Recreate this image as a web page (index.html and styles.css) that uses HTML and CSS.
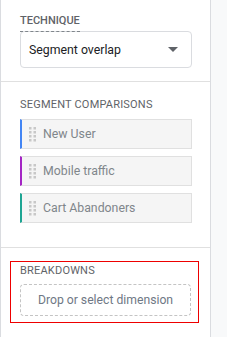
FILE: index.html
```html
<!DOCTYPE html>
<html lang="en">
<head>
    <meta charset="UTF-8">
    <meta name="viewport" content="width=device-width, initial-scale=1.0">
    <title>Tab settings</title>
    <link rel="stylesheet" href="styles.css">
</head>
<body>
    <div class="panel">
        <!-- Technique -->
        <div class="section technique">
            <div class="label-row"><span class="label hint">Technique</span></div>
            <div class="select">
                <span>Segment overlap</span>
                <svg class="caret" width="10" height="5" viewBox="0 0 10 5"><path d="M0 0h10L5 5z" fill="#5f6368"/></svg>
            </div>
        </div>

        <!-- Segment comparisons -->
        <div class="section segments">
            <div class="label">Segment comparisons</div>
            <div class="chip-list">
                <div class="chip blue">
                    <svg class="grip" width="8" height="15" viewBox="0 0 8 15">
                        <g fill="#c8c8c8">
                            <rect x="0" y="0" width="2.5" height="2.5"/><rect x="4.5" y="0" width="2.5" height="2.5"/>
                            <rect x="0" y="4" width="2.5" height="2.5"/><rect x="4.5" y="4" width="2.5" height="2.5"/>
                            <rect x="0" y="8" width="2.5" height="2.5"/><rect x="4.5" y="8" width="2.5" height="2.5"/>
                            <rect x="0" y="12" width="2.5" height="2.5"/><rect x="4.5" y="12" width="2.5" height="2.5"/>
                        </g>
                    </svg>
                    <span>New User</span>
                </div>
                <div class="chip purple">
                    <svg class="grip" width="8" height="15" viewBox="0 0 8 15">
                        <g fill="#c8c8c8">
                            <rect x="0" y="0" width="2.5" height="2.5"/><rect x="4.5" y="0" width="2.5" height="2.5"/>
                            <rect x="0" y="4" width="2.5" height="2.5"/><rect x="4.5" y="4" width="2.5" height="2.5"/>
                            <rect x="0" y="8" width="2.5" height="2.5"/><rect x="4.5" y="8" width="2.5" height="2.5"/>
                            <rect x="0" y="12" width="2.5" height="2.5"/><rect x="4.5" y="12" width="2.5" height="2.5"/>
                        </g>
                    </svg>
                    <span>Mobile traffic</span>
                </div>
                <div class="chip teal">
                    <svg class="grip" width="8" height="15" viewBox="0 0 8 15">
                        <g fill="#c8c8c8">
                            <rect x="0" y="0" width="2.5" height="2.5"/><rect x="4.5" y="0" width="2.5" height="2.5"/>
                            <rect x="0" y="4" width="2.5" height="2.5"/><rect x="4.5" y="4" width="2.5" height="2.5"/>
                            <rect x="0" y="8" width="2.5" height="2.5"/><rect x="4.5" y="8" width="2.5" height="2.5"/>
                            <rect x="0" y="12" width="2.5" height="2.5"/><rect x="4.5" y="12" width="2.5" height="2.5"/>
                        </g>
                    </svg>
                    <span>Cart Abandoners</span>
                </div>
            </div>
        </div>

        <!-- Breakdowns -->
        <div class="section breakdowns">
            <div class="drop-zone active">
                <div class="label">Breakdowns</div>
                <div class="drop-target">Drop or select dimension</div>
            </div>
        </div>
    </div>
</body>
</html>
```

FILE: styles.css
```css
* { margin: 0; padding: 0; box-sizing: border-box; }

body {
    font-family: Roboto, "Noto Sans", Arial, sans-serif;
    background: #f8f9fa;
    min-height: 100vh;
}

.panel {
    width: 211px;
    min-height: 100vh;
    background: white;
    border-left: 1px solid #dadce0;
    border-right: 1px solid #dadce0;
}

.section {
    padding: 0 18px 0 19px;
    border-bottom: 1px solid #e0e0e0;
}

.label {
    font-size: 11px;
    line-height: 16px;
    color: #5f6368;
    text-transform: uppercase;
    letter-spacing: 0.2px;
}

.label-row { height: 19px; }

.label.hint {
    display: inline-block;
    padding-bottom: 2px;
    border-bottom: 1px dashed #80868b;
    font-weight: 500;
    letter-spacing: 0;
}

/* technique */
.technique { padding-top: 9px; padding-bottom: 13px; }

.select {
    margin-top: 3px;
    height: 37px;
    border: 1px solid #dadce0;
    border-radius: 4px;
    padding: 0 13px 0 8px;
    display: flex;
    align-items: center;
    justify-content: space-between;
    font-size: 12.3px;
    color: #202124;
}

/* segments */
.segments { padding-top: 15px; padding-bottom: 24px; }

.chip-list {
    margin-top: 6px;
    display: flex;
    flex-direction: column;
    gap: 7px;
}

.chip {
    height: 30px;
    background: #f5f5f5;
    border: 1px solid #e0e0e0;
    border-left: 2px solid #4285f4;
    display: flex;
    align-items: center;
    padding-left: 7px;
    font-size: 12.3px;
    color: #80868b;
}

.chip .grip { margin-right: 6px; }

.chip.blue { border-left-color: #4285f4; }
.chip.purple { border-left-color: #a425c4; }
.chip.teal { border-left-color: #1ea593; }

/* breakdowns */
.breakdowns { border-bottom: none; padding-top: 13px; }

.drop-zone {
    margin: 0 -7px 0 -10px;
    padding: 1px 7px 6px 9px;
    border: 1px solid #ee0000;
}

.drop-target {
    margin-top: 5px;
    height: 32px;
    border: 1px dashed #c4c4c4;
    border-radius: 4px;
    display: flex;
    align-items: center;
    justify-content: center;
    font-size: 12.2px;
    color: #6f7885;
}
```
